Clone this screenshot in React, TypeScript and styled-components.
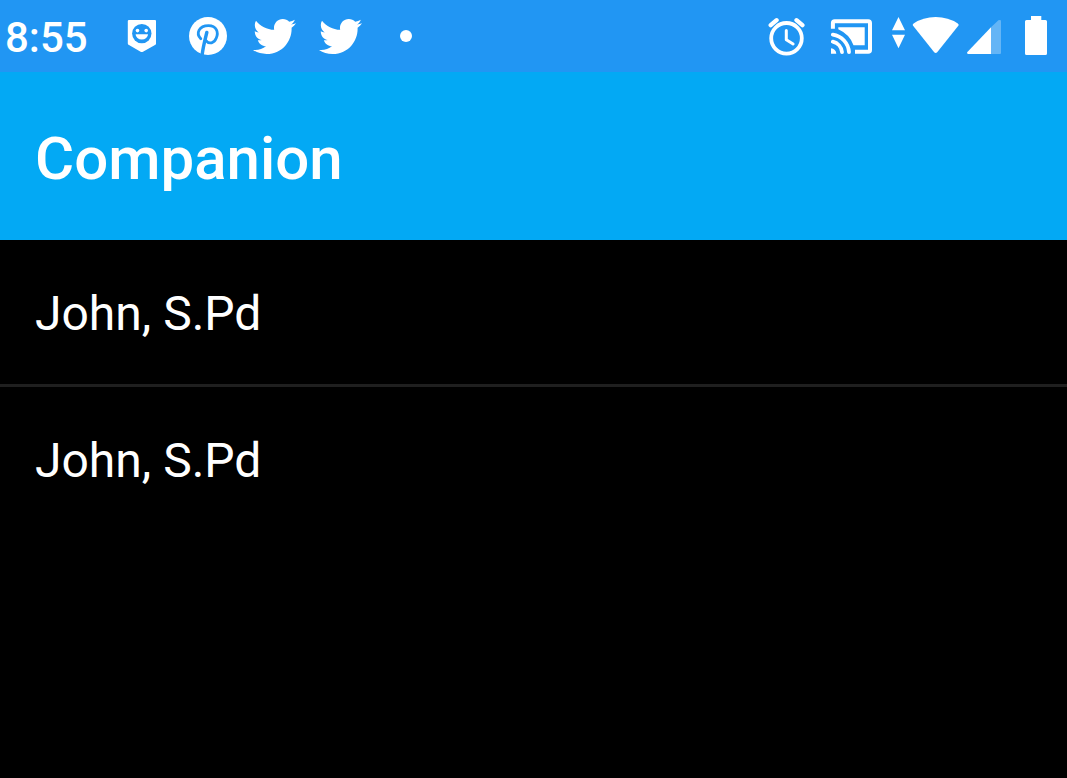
import React from 'react';
import styled, { createGlobalStyle } from 'styled-components';
import { FaTwitter } from 'react-icons/fa';

const GlobalStyle = createGlobalStyle`
  body {
    margin: 0;
    background: #000;
    color: #fff;
    font-family: Roboto, sans-serif;
  }
`;

const Screen = styled.div`
  min-height: 100vh;
  background: #000;
`;

const StatusBar = styled.div`
  display: flex;
  align-items: center;
  justify-content: space-between;
  height: 72px;
  padding: 0 20px 0 5px;
  background: #2196f3;
`;

const StatusGroup = styled.div`
  display: flex;
  align-items: center;
`;

const Clock = styled.time`
  width: 104px;
  padding-top: 4px;
  font-size: 42px;
  font-weight: 500;
  line-height: 48px;
`;

const NotificationSlot = styled.span`
  display: flex;
  align-items: center;
  justify-content: center;
  width: 66px;
  height: 72px;
`;

const SystemIcon = styled.svg<{ $gap?: number }>`
  display: block;
  flex: none;
  margin-left: ${({ $gap = 0 }) => $gap}px;
`;

const AppBar = styled.header`
  display: flex;
  align-items: center;
  height: 168px;
  padding: 0 35px;
  background: #03a9f4;
`;

const Title = styled.h1`
  margin: 0;
  padding-top: 6px;
  font-size: 60px;
  font-weight: 500;
  line-height: 72px;
`;

const List = styled.ul`
  margin: 0;
  padding: 0;
  list-style: none;
`;

const ListItem = styled.li`
  padding: 46px 35px 42px;
  font-size: 48px;
  line-height: 56px;

  & + & {
    border-top: 3px solid #1f1f1f;
  }
`;

function BadgeIcon() {
  return (
    <SystemIcon width="30" height="72" viewBox="0 0 30 72" aria-hidden="true">
      <path d="M2 20h26q1 0 1 1v22.500q0 1-1 1.600L16 51.700q-1.200.7-2.400 0L2 45q-1.200-.6-1.200-1.600V21q0-1 1.200-1z" fill="#fff" />
      <circle cx="14.800" cy="33.600" r="9.700" fill="#2196f3" />
      <circle cx="10.500" cy="30.600" r="1.800" fill="#fff" />
      <circle cx="19.200" cy="30.600" r="1.800" fill="#fff" />
      <path d="M8.600 34.200h12.400a6.200 5.400 0 0 1-12.400 0z" fill="#fff" />
    </SystemIcon>
  );
}

function PinterestIcon() {
  return (
    <SystemIcon width="38" height="38" viewBox="0 0 38 38" fill="none" aria-hidden="true">
      <circle cx="19" cy="19" r="19" fill="#fff" />
      <g stroke="#2196f3" strokeLinecap="round">
        <path d="M11.800 21.800C6.500 16.500 10 8.600 19.500 8.600C27.500 8.600 29.800 15 27.300 21C25.200 26.300 20.200 27.500 17.200 23.800" strokeWidth="2.800" />
        <path d="M17.800 15.500C16.500 21 14.200 29 13.200 37.500" strokeWidth="3.400" />
      </g>
    </SystemIcon>
  );
}

function DotIcon() {
  return (
    <SystemIcon width="12" height="72" viewBox="0 0 12 72" aria-hidden="true">
      <circle cx="6" cy="36" r="6" fill="#fff" />
    </SystemIcon>
  );
}

function AlarmIcon() {
  return (
    <SystemIcon width="38" height="72" viewBox="0 0 38 72" fill="none" stroke="#fff" aria-hidden="true">
      <circle cx="18.500" cy="38.300" r="15.300" strokeWidth="3.800" />
      <path d="M18.300 30.500v9.300l6.800 4.200" strokeWidth="3" strokeLinecap="round" strokeLinejoin="round" />
      <path d="M2.700 25.200l5.900-5M34.400 25.200l-5.900-5" strokeWidth="4.300" strokeLinecap="round" />
    </SystemIcon>
  );
}

function CastIcon() {
  return (
    <SystemIcon $gap={24} width="43" height="72" viewBox="0 0 43 72" aria-hidden="true">
      <g fill="none" stroke="#fff" strokeWidth="4">
        <path d="M2.900 28.800v-5.800q0-1.800 1.800-1.800h33.500q1.800 0 1.800 1.800v27q0 1.800-1.800 1.800H25" />
        <path d="M2.800 41.600a12 12 0 0 1 9.200 10.600M2.800 34.600a19 19 0 0 1 16.200 17.600" strokeWidth="3.800" strokeLinecap="round" />
      </g>
      <path d="M1 48.200a5.500 5.500 0 0 1 5.300 5.500H1z" fill="#fff" />
      <path d="M8.300 27.300h26.400v18H23.500Q20 34.500 8.300 29.200z" fill="#fff" />
    </SystemIcon>
  );
}

function TrafficIcon() {
  return (
    <SystemIcon $gap={19} width="13" height="72" viewBox="0 0 13 72" fill="#fff" aria-hidden="true">
      <path d="M6.500 17L13 30.300H0zM0 34.700h13L6.500 48.200z" />
    </SystemIcon>
  );
}

function WifiIcon() {
  return (
    <SystemIcon $gap={7} width="47" height="72" viewBox="0 0 47 72" fill="#fff" aria-hidden="true">
      <path d="M1.600 23.500Q11 17 23.700 17t22.100 6.500q1.400 1 .5 2.300L25.200 52.300q-1.500 1.600-3 0L1.100 25.800q-.9-1.300.5-2.300z" />
    </SystemIcon>
  );
}

function SignalIcon() {
  return (
    <SystemIcon $gap={8} width="34" height="72" viewBox="0 0 34 72" fill="#fff" aria-hidden="true">
      <path d="M24 27.300V54H1q-1.500-.5-.6-2z" />
      <path d="M24 27.300l7.400-7q2.600-1.200 2.600 1V53q0 1-1 1h-9z" opacity="0.300" />
    </SystemIcon>
  );
}

function BatteryIcon() {
  return (
    <SystemIcon $gap={24} width="22" height="72" viewBox="0 0 22 72" fill="#fff" aria-hidden="true">
      <path d="M6 16h10.300v4H20.500q1.500 0 1.500 1.500v32q0 1.500-1.500 1.500h-19Q0 55 0 53.500v-32Q0 20 1.500 20H6z" />
    </SystemIcon>
  );
}

const people = [
  { id: 1, name: 'John, S.Pd' },
  { id: 2, name: 'John, S.Pd' },
];

export default function App() {
  return (
    <>
      <GlobalStyle />
      <Screen>
        <StatusBar>
          <StatusGroup>
            <Clock>8:55</Clock>
            <NotificationSlot><BadgeIcon /></NotificationSlot>
            <NotificationSlot><PinterestIcon /></NotificationSlot>
            <NotificationSlot><FaTwitter size={43} /></NotificationSlot>
            <NotificationSlot><FaTwitter size={43} /></NotificationSlot>
            <NotificationSlot><DotIcon /></NotificationSlot>
          </StatusGroup>
          <StatusGroup>
            <AlarmIcon />
            <CastIcon />
            <TrafficIcon />
            <WifiIcon />
            <SignalIcon />
            <BatteryIcon />
          </StatusGroup>
        </StatusBar>
        <AppBar>
          <Title>Companion</Title>
        </AppBar>
        <main>
          <List>
            {people.map((person) => (
              <ListItem key={person.id}>{person.name}</ListItem>
            ))}
          </List>
        </main>
      </Screen>
    </>
  );
}
